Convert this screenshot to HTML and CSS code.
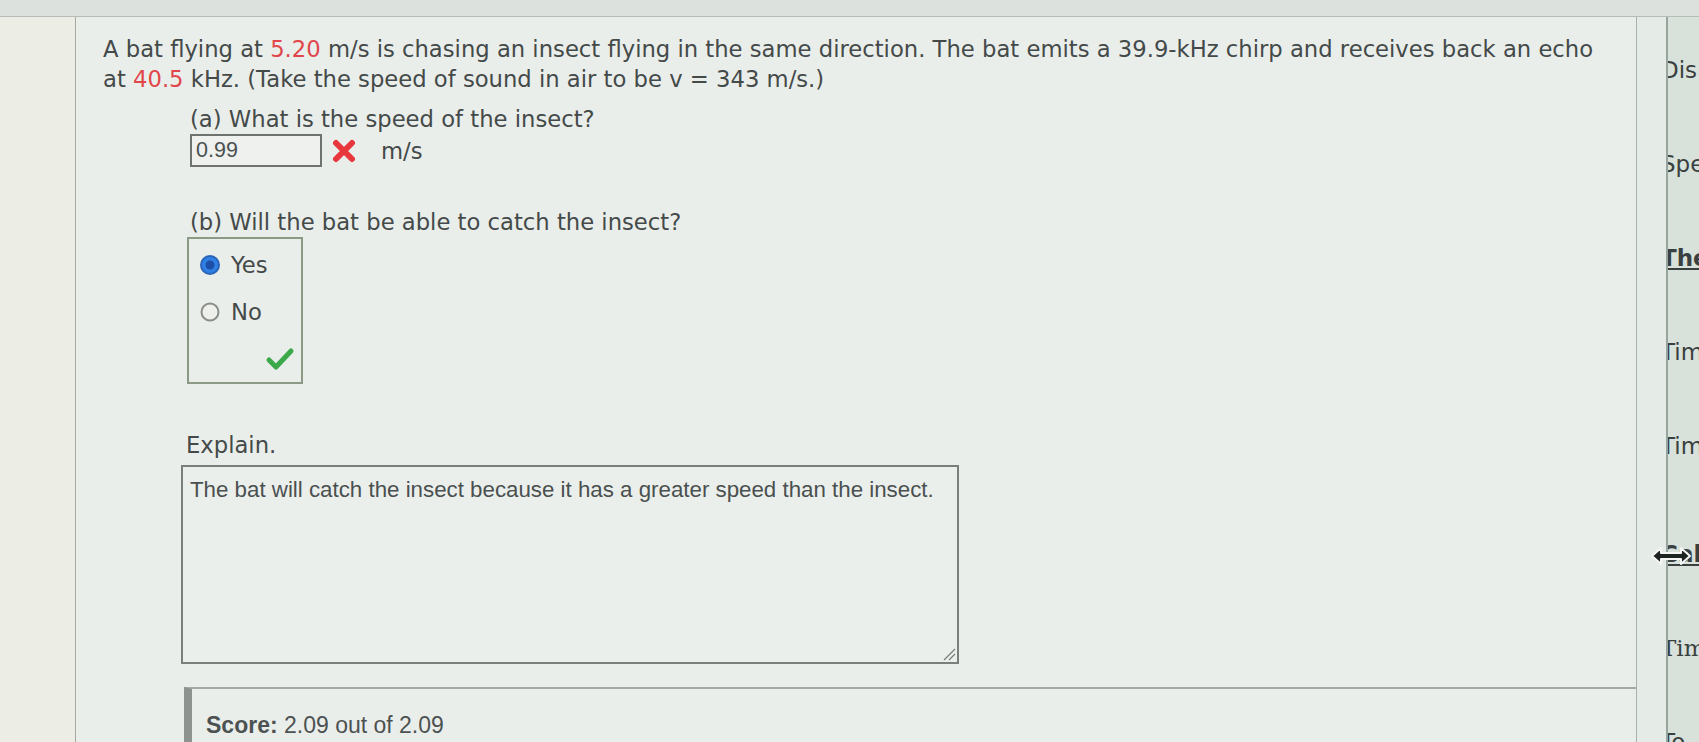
FILE: index.html
```html
<!DOCTYPE html>
<html lang="en">
<head>
<meta charset="utf-8">
<title>Doppler question</title>
<link rel="stylesheet" href="styles.css">
</head>
<body>
<div class="screen">
  <div class="topbar"></div>
  <div class="row">
    <div class="leftpane"></div>
    <div class="main">
      <p class="question">A bat flying at <span class="num">5.20</span> m/s is chasing an insect flying in the same direction. The bat emits a 39.9-kHz chirp and receives back an echo at <span class="num">40.5</span> kHz. (Take the speed of sound in air to be v = 343 m/s.)</p>
      <div class="parts">
        <p class="part-label">(a) What is the speed of the insect?</p>
        <div class="answer-row">
          <div class="input">0.99</div>
          <svg class="xmark" width="28" height="24" viewBox="0 0 28 24"><path d="M6 4 L22 20 M22 4 L6 20" stroke="#e8373c" stroke-width="6" stroke-linecap="round"/></svg>
          <span class="unit">m/s</span>
        </div>
        <p class="part-label part-b">(b) Will the bat be able to catch the insect?</p>
        <div class="radiobox">
          <div class="opt">
            <svg width="22" height="22" viewBox="0 0 22 22"><circle cx="11" cy="11" r="9" fill="#2f7fe4" stroke="#2a63b8" stroke-width="2"/><circle cx="11" cy="11" r="4.5" fill="#1d4fa6"/></svg>
            <span>Yes</span>
          </div>
          <div class="opt">
            <svg width="22" height="22" viewBox="0 0 22 22"><circle cx="11" cy="11" r="8.5" fill="#eef0ec" stroke="#8b8f88" stroke-width="2"/></svg>
            <span>No</span>
          </div>
          <div class="check-row">
            <svg width="30" height="26" viewBox="0 0 30 26"><path d="M4 14 L11 21 L26 5" fill="none" stroke="#3ba84a" stroke-width="5" stroke-linecap="round" stroke-linejoin="round"/></svg>
          </div>
        </div>
        <p class="explain">Explain.</p>
        <div class="textarea">The bat will catch the insect because it has a greater speed than the insect.
          <svg class="grip" width="14" height="14" viewBox="0 0 14 14"><path d="M13 2 L2 13 M13 7 L7 13" stroke="#7b807b" stroke-width="1.3"/></svg>
        </div>
        <div class="score"><b>Score:</b> 2.09 out of 2.09</div>
      </div>
    </div>
    <div class="gutter"></div>
    <div class="side">
      <div class="side-item">Dis</div>
      <div class="side-item">Spe</div>
      <div class="side-item head">The</div>
      <div class="side-item">Tim</div>
      <div class="side-item">Tim</div>
      <div class="side-item head gap">Cal</div>
      <div class="side-item serif">Tim</div>
      <div class="side-item">To</div>
    </div>
  </div>
  <svg class="cursor" width="42" height="20" viewBox="0 0 42 20"><path d="M2 10 L11 2 L11 7 L31 7 L31 2 L40 10 L31 18 L31 13 L11 13 L11 18 Z" fill="#1e2422" stroke="#f4f6f4" stroke-width="2" stroke-linejoin="round"/></svg>
</div>
</body>
</html>
```
FILE: styles.css
```css
* { box-sizing: border-box; }
html, body { margin: 0; padding: 0; }
body {
  width: 1699px;
  height: 742px;
  overflow: hidden;
  background: #e9edea;
  font-family: "DejaVu Sans", Verdana, sans-serif;
  color: #444a49;
}
.screen { position: relative; display: flex; flex-direction: column; height: 742px; }
.topbar { flex: none; height: 17px; background: #dde1de; border-bottom: 1px solid #b7bcb8; }
.row { flex: 1; display: flex; min-height: 0; }
.leftpane { flex: none; width: 76px; background: #eceee5; border-right: 1px solid #a7a99d; }
.main {
  flex: none;
  width: 1561px;
  padding: 17px 0 0 27px;
  background: #eaeeeb;
  border-right: 1px solid #a9b1ab;
  overflow: hidden;
}
.gutter { flex: none; width: 31px; background: #e5ebe7; border-right: 2px solid #98a59e; }
.side { flex: 1; overflow: hidden; background: #d8e2db; padding-top: 40px; }

.question { margin: 0; width: 1500px; font-size: 22.7px; line-height: 30px; }
.num { color: #e0464a; }

.parts { margin-left: 87px; }
.part-label { margin: 11px 0 0; font-size: 22.7px; line-height: 29px; }
.part-b { margin-top: 41px; }

.answer-row { display: flex; align-items: center; height: 33px; }
.input {
  width: 132px;
  height: 33px;
  border: 2px solid #6e736f;
  background: #eef1ee;
  font-family: "Liberation Sans", Arial, sans-serif;
  font-size: 21.5px;
  line-height: 29px;
  padding-left: 4px;
  color: #4a504f;
}
.xmark { margin-left: 8px; }
.unit { margin-left: 23px; font-size: 22.7px; }

.radiobox {
  width: 116px;
  height: 147px;
  margin-left: -3px;
  border: 2px solid #8c9985;
  padding: 14px 0 0 10px;
}
.opt { display: flex; align-items: center; gap: 10px; height: 24px; font-size: 22.7px; }
.opt + .opt { margin-top: 23px; }
.check-row { display: flex; justify-content: flex-end; padding-right: 6px; margin-top: 22px; }

.explain { margin: 47px 0 0 -4px; font-size: 22.7px; line-height: 29px; }
.textarea {
  position: relative;
  width: 778px;
  height: 199px;
  margin: 5px 0 0 -9px;
  border: 2px solid #7a7f7a;
  background: #ebefec;
  padding: 10px 7px;
  font-family: "Liberation Sans", Arial, sans-serif;
  font-size: 22.3px;
  line-height: 26px;
  color: #4a504f;
}
.grip { position: absolute; right: 1px; bottom: 1px; }

.score {
  width: 1453px;
  height: 80px;
  margin: 23px 0 0 -6px;
  border-left: 8px solid #8d938f;
  border-top: 2px solid #a4aaa5;
  padding: 23px 0 0 14px;
  font-family: "Liberation Sans", Arial, sans-serif;
  font-size: 23px;
  line-height: 26px;
  color: #4c5251;
}

.side-item {
  height: 94px;
  margin-left: -7px;
  font-size: 23px;
  line-height: 26px;
  color: #3a403f;
  white-space: nowrap;
}
.side-item.head { font-weight: bold; text-decoration: underline; }
.side-item.gap { margin-top: 14px; }
.side-item.serif { font-family: "DejaVu Serif", serif; }

.cursor { position: absolute; left: 1650px; top: 546px; }
```
